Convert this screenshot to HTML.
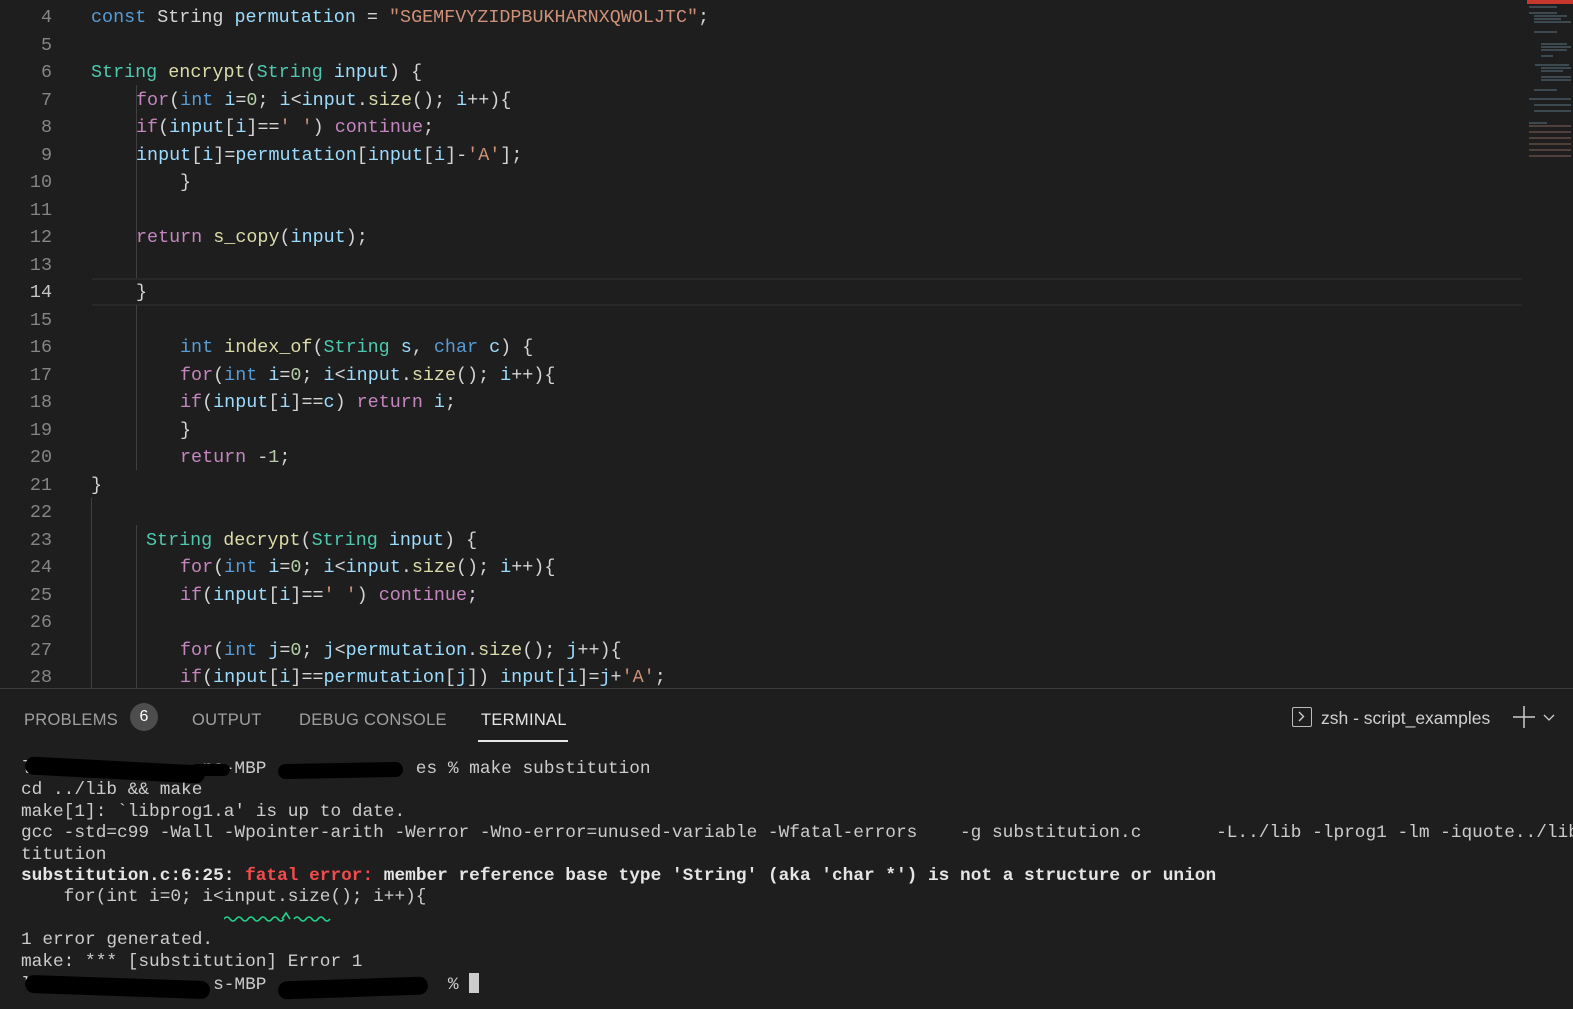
<!DOCTYPE html>
<html><head><meta charset="utf-8"><style>
body{margin:0;width:1573px;height:1009px;background:#1e1e1e;overflow:hidden;position:relative;font-family:"Liberation Mono",monospace}
.ln{position:absolute;left:0;width:52px;text-align:right;color:#858585;font-size:18.4px;line-height:27.5px}
.c{position:absolute;font-size:18.4px;line-height:27.5px;white-space:pre;color:#d4d4d4}
.k{color:#569cd6}.t{color:#4ec9b0}.f{color:#dcdcaa}.v{color:#9cdcfe}.p{color:#c586c0}.s{color:#ce9178}.n{color:#b5cea8}
.g{position:absolute;width:1px;background:#404040}
.tab{position:absolute;top:711px;font-family:"Liberation Sans",sans-serif;font-size:16.5px;color:#a0a0a0;letter-spacing:.3px}
.tl{position:absolute;left:21px;font-size:17.8px;line-height:21.4px;white-space:pre;color:#cccccc}
.b{font-weight:bold;color:#e5e5e5}
.blot{position:absolute;background:#000;border-radius:12px}
#ed{position:absolute;left:0;top:2px;width:1573px;height:686px}
#term{position:absolute;left:0;top:4px;width:1573px;height:1005px}
</style></head><body>
<div id="ed">
<div style="position:absolute;left:92px;top:276px;width:1430px;height:24px;border-top:2px solid #282828;border-bottom:2px solid #282828"></div>
<div class="g" style="left:136px;top:83px;height:193px"></div>
<div class="g" style="left:136px;top:303px;height:165px"></div>
<div class="g" style="left:91px;top:496px;height:190px"></div>
<div class="g" style="left:136px;top:523px;height:163px"></div>

<div class="ln" style="top:2px">4</div><div class="ln" style="top:29.5px">5</div><div class="ln" style="top:57px">6</div><div class="ln" style="top:84.5px">7</div><div class="ln" style="top:112px">8</div><div class="ln" style="top:139.5px">9</div><div class="ln" style="top:167px">10</div><div class="ln" style="top:194.5px">11</div><div class="ln" style="top:222px">12</div><div class="ln" style="top:249.5px">13</div><div class="ln" style="top:277px;color:#c6c6c6">14</div><div class="ln" style="top:304.5px">15</div><div class="ln" style="top:332px">16</div><div class="ln" style="top:359.5px">17</div><div class="ln" style="top:387px">18</div><div class="ln" style="top:414.5px">19</div><div class="ln" style="top:442px">20</div><div class="ln" style="top:469.5px">21</div><div class="ln" style="top:497px">22</div><div class="ln" style="top:524.5px">23</div><div class="ln" style="top:552px">24</div><div class="ln" style="top:579.5px">25</div><div class="ln" style="top:607px">26</div><div class="ln" style="top:634.5px">27</div><div class="ln" style="top:662px">28</div>

<div class="c" style="left:91px;top:2px"><span class="k">const</span> String <span class="v">permutation</span> = <span class="s">"SGEMFVYZIDPBUKHARNXQWOLJTC"</span>;</div>
<div class="c" style="left:91px;top:57px"><span class="t">String</span> <span class="f">encrypt</span>(<span class="t">String</span> <span class="v">input</span>) {</div>
<div class="c" style="left:136px;top:84.5px"><span class="p">for</span>(<span class="k">int</span> <span class="v">i</span>=<span class="n">0</span>; <span class="v">i</span>&lt;<span class="v">input</span>.<span class="f">size</span>(); <span class="v">i</span>++){</div>
<div class="c" style="left:136px;top:112px"><span class="p">if</span>(<span class="v">input</span>[<span class="v">i</span>]==<span class="s">' '</span>) <span class="p">continue</span>;</div>
<div class="c" style="left:136px;top:139.5px"><span class="v">input</span>[<span class="v">i</span>]=<span class="v">permutation</span>[<span class="v">input</span>[<span class="v">i</span>]-<span class="s">'A'</span>];</div>
<div class="c" style="left:180px;top:167px">}</div>
<div class="c" style="left:136px;top:222px"><span class="p">return</span> <span class="f">s_copy</span>(<span class="v">input</span>);</div>
<div class="c" style="left:136px;top:277px">}</div>
<div class="c" style="left:180px;top:332px"><span class="k">int</span> <span class="f">index_of</span>(<span class="t">String</span> <span class="v">s</span>, <span class="k">char</span> <span class="v">c</span>) {</div>
<div class="c" style="left:180px;top:359.5px"><span class="p">for</span>(<span class="k">int</span> <span class="v">i</span>=<span class="n">0</span>; <span class="v">i</span>&lt;<span class="v">input</span>.<span class="f">size</span>(); <span class="v">i</span>++){</div>
<div class="c" style="left:180px;top:387px"><span class="p">if</span>(<span class="v">input</span>[<span class="v">i</span>]==<span class="v">c</span>) <span class="p">return</span> <span class="v">i</span>;</div>
<div class="c" style="left:180px;top:414.5px">}</div>
<div class="c" style="left:180px;top:442px"><span class="p">return</span> -<span class="n">1</span>;</div>
<div class="c" style="left:91px;top:469.5px">}</div>
<div class="c" style="left:146px;top:524.5px"><span class="t">String</span> <span class="f">decrypt</span>(<span class="t">String</span> <span class="v">input</span>) {</div>
<div class="c" style="left:180px;top:552px"><span class="p">for</span>(<span class="k">int</span> <span class="v">i</span>=<span class="n">0</span>; <span class="v">i</span>&lt;<span class="v">input</span>.<span class="f">size</span>(); <span class="v">i</span>++){</div>
<div class="c" style="left:180px;top:579.5px"><span class="p">if</span>(<span class="v">input</span>[<span class="v">i</span>]==<span class="s">' '</span>) <span class="p">continue</span>;</div>
<div class="c" style="left:180px;top:634.5px"><span class="p">for</span>(<span class="k">int</span> <span class="v">j</span>=<span class="n">0</span>; <span class="v">j</span>&lt;<span class="v">permutation</span>.<span class="f">size</span>(); <span class="v">j</span>++){</div>
<div class="c" style="left:180px;top:662px;height:22px;overflow:hidden"><span class="p">if</span>(<span class="v">input</span>[<span class="v">i</span>]==<span class="v">permutation</span>[<span class="v">j</span>]) <span class="v">input</span>[<span class="v">i</span>]=<span class="v">j</span>+<span class="s">'A'</span>;</div>
</div>

<!-- minimap -->
<div style="position:absolute;left:1527px;top:0;width:46px;height:688px">
<div style="position:absolute;left:0;top:0;width:46px;height:4px;background:#c8372d"></div>
<svg width="46" height="180" style="position:absolute;top:6px;left:0" stroke-width="1.3" opacity=".55">
<g stroke="#7a9cb0"><line x1="2" y1="1" x2="30" y2="1"/><line x1="2" y1="7" x2="30" y2="7"/><line x1="7" y1="10" x2="40" y2="10"/><line x1="7" y1="13" x2="34" y2="13"/><line x1="7" y1="16" x2="44" y2="16"/><line x1="7" y1="26" x2="30" y2="26"/><line x1="14" y1="38" x2="40" y2="38"/><line x1="14" y1="41" x2="44" y2="41"/><line x1="14" y1="44" x2="40" y2="44"/><line x1="14" y1="50" x2="26" y2="50"/><line x1="8" y1="59" x2="42" y2="59"/><line x1="14" y1="62" x2="44" y2="62"/><line x1="14" y1="65" x2="36" y2="65"/><line x1="14" y1="71" x2="44" y2="71"/><line x1="14" y1="74" x2="44" y2="74"/><line x1="7" y1="84" x2="30" y2="84"/><line x1="2" y1="93" x2="44" y2="93"/><line x1="7" y1="99" x2="44" y2="99"/><line x1="7" y1="105" x2="44" y2="105"/><line x1="2" y1="117" x2="20" y2="117"/></g>
<g stroke="#b08070"><line x1="2" y1="120" x2="44" y2="120"/><line x1="2" y1="126" x2="44" y2="126"/><line x1="2" y1="132" x2="44" y2="132"/><line x1="2" y1="138" x2="44" y2="138"/><line x1="2" y1="144" x2="44" y2="144"/><line x1="2" y1="150" x2="44" y2="150"/></g></svg>
</div>

<!-- panel -->
<div style="position:absolute;left:0;top:688px;width:1573px;height:1px;background:#3c3c3c"></div>
<div class="tab" style="left:24px">PROBLEMS</div>
<div style="position:absolute;left:130px;top:703px;width:28px;height:28px;border-radius:14px;background:#4d4d4d;color:#fff;font-family:'Liberation Sans',sans-serif;font-size:16px;line-height:28px;text-align:center">6</div>
<div class="tab" style="left:192px">OUTPUT</div>
<div class="tab" style="left:299px">DEBUG CONSOLE</div>
<div class="tab" style="left:481px;color:#e7e7e7">TERMINAL</div>
<div style="position:absolute;left:478px;top:740px;width:90px;height:2px;background:#e7e7e7"></div>
<div style="position:absolute;left:1292px;top:707px;width:20px;height:20px;border:1.5px solid #bbb;border-radius:2px;box-sizing:border-box"><svg width="17" height="17" style="position:absolute;left:0;top:0"><path d="M6 4l4.5 4.5L6 13" fill="none" stroke="#ccc" stroke-width="1.4"/></svg></div>
<div style="position:absolute;left:1321px;top:708px;font-family:'Liberation Sans',sans-serif;font-size:17.5px;color:#d0d0d0">zsh - script_examples</div>
<svg style="position:absolute;left:1513px;top:705px" width="50" height="24"><path d="M11 1v22M0 12h22" stroke="#ccc" stroke-width="1.5"/><path d="M31 10l5 5 5-5" fill="none" stroke="#ccc" stroke-width="1.3"/></svg>

<div id="term">
<div class="tl" style="top:755px">l                ns-MBP              es % make substitution</div>
<div class="tl" style="top:776.4px">cd ../lib &amp;&amp; make</div>
<div class="tl" style="top:797.8px">make[1]: `libprog1.a' is up to date.</div>
<div class="tl" style="top:819.2px">gcc -std=c99 -Wall -Wpointer-arith -Werror -Wno-error=unused-variable -Wfatal-errors    -g substitution.c       -L../lib -lprog1 -lm -iquote../lib</div>
<div class="tl" style="top:840.6px">titution</div>
<div class="tl b" style="top:862px">substitution.c:6:25: <span style="color:#f14c4c">fatal error:</span> member reference base type 'String' (aka 'char *') is not a structure or union</div>
<div class="tl" style="top:883.4px">    for(int i=0; i&lt;input.size(); i++){</div>
<svg style="position:absolute;left:224px;top:906px" width="110" height="14"><path d="M0 9 q3 -4 6 0 t6 0 t6 0 t6 0 t6 0 t6 0 t6 0 t6 0 t6 0 t6 0" fill="none" stroke="#23d18b" stroke-width="1.6"/><path d="M58 9l4-6 4 6" fill="none" stroke="#23d18b" stroke-width="1.6"/><path d="M70 9 q3 -4 6 0 t6 0 t6 0 t6 0 t6 0 t6 0" fill="none" stroke="#23d18b" stroke-width="1.6"/></svg>
<div class="tl" style="top:926.2px">1 error generated.</div>
<div class="tl" style="top:947.6px">make: *** [substitution] Error 1</div>
<div class="tl" style="top:969px">l                 s-MBP                 % <span style="display:inline-block;width:10px;height:20px;background:#ccc;vertical-align:-4px"></span></div>
<div class="blot" style="left:25px;top:757px;width:180px;height:18px;transform:rotate(3deg)"></div>
<div class="blot" style="left:190px;top:760px;width:40px;height:12px"></div>
<div class="blot" style="left:278px;top:759px;width:125px;height:15px;transform:rotate(-1deg)"></div>
<div class="blot" style="left:25px;top:974px;width:185px;height:18px;transform:rotate(2deg)"></div>
<div class="blot" style="left:278px;top:975px;width:150px;height:18px;transform:rotate(-2deg)"></div>
</div>
</body></html>
